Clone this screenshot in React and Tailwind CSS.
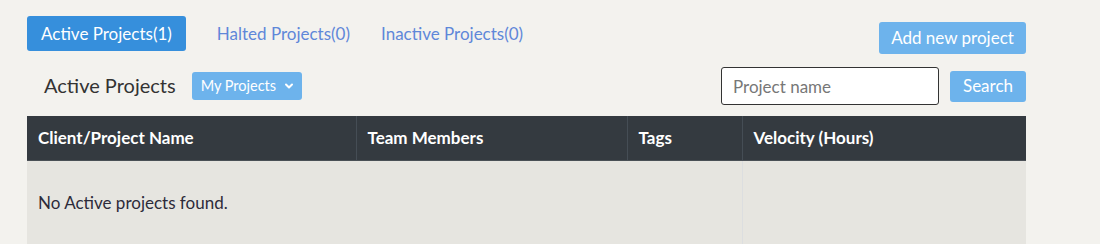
import React from 'react';

const font = { fontFamily: '"Lato", "Noto Sans", sans-serif' };

function ChevronDown() {
  return (
    <svg width="10" height="10" viewBox="0 0 10 10" className="ml-[8px]">
      <path d="M2 3.5 L5 6.5 L8 3.5" fill="none" stroke="white" strokeWidth="2" strokeLinecap="round" strokeLinejoin="round" />
    </svg>
  );
}

const App = () => {
  return (
    <div className="w-[1100px] h-[244px] overflow-hidden bg-[#f3f2ee] text-[#333]" style={font}>
      <div className="w-[999px] ml-[27px] pt-[16px]">
        {/* tabs row */}
        <div className="flex items-start justify-between">
          <div className="flex items-center gap-[31px]">
            <button className="h-[35px] px-[14px] rounded-[3px] bg-[#368fdc] text-white text-[17px]">
              Active Projects(1)
            </button>
            <span className="text-[17px] text-[#5f87d9]">Halted Projects(0)</span>
            <span className="text-[17px] text-[#5f87d9]">Inactive Projects(0)</span>
          </div>
          <button className="mt-[6px] h-[32px] w-[147px] rounded-[3px] bg-[#6db3ec] text-white text-[17px]">
            Add new project
          </button>
        </div>

        {/* heading row */}
        <div className="mt-[13px] flex items-center justify-between h-[38px]">
          <div className="flex items-center">
            <h2 className="ml-[17px] pb-[3px] text-[20px] text-[#333]">Active Projects</h2>
            <div className="ml-[16px] flex items-center h-[28px] pl-[9px] pr-[8px] rounded-[3px] bg-[#6db3ec] text-white text-[14.5px]">
              My Projects
              <ChevronDown />
            </div>
          </div>
          <div className="flex items-center">
            <input
              placeholder="Project name"
              className="w-[218px] h-[38px] px-[11px] bg-white border border-[#333] rounded-[3px] text-[17px] placeholder:text-[#777] outline-none"
              style={font}
            />
            <button className="ml-[11px] h-[31px] w-[76px] rounded-[3px] bg-[#6db3ec] text-white text-[17px]">
              Search
            </button>
          </div>
        </div>

        {/* table */}
        <table className="mt-[11px] w-[999px] border-collapse">
          <thead>
            <tr className="bg-[#343a40] text-white text-[17px] font-bold text-left">
              <th className="w-[329px] h-[44px] px-[11px] border-r border-[#454d55] border-b border-b-[#4a5056]">Client/Project Name</th>
              <th className="w-[271px] px-[11px] border-r border-[#454d55] border-b border-b-[#4a5056]">Team Members</th>
              <th className="w-[115px] px-[11px] border-r border-[#454d55] border-b border-b-[#4a5056]">Tags</th>
              <th className="px-[11px] border-b border-b-[#4a5056]">Velocity (Hours)</th>
            </tr>
          </thead>
          <tbody>
            <tr className="bg-[#e6e5e0] text-[17px]">
              <td colSpan={3} className="h-[84px] px-[11px] text-[#2d2b3a]">No Active projects found.</td>
              <td className="border-l border-[#dcdee0]"></td>
            </tr>
          </tbody>
        </table>
      </div>
    </div>
  );
};

export default App;
